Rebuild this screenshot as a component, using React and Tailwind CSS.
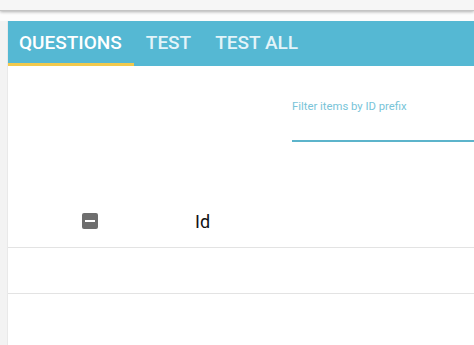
const tabs = ['QUESTIONS', 'TEST', 'TEST ALL']

const App = () => {
  return (
    <div className="w-[474px] h-[345px] overflow-hidden bg-white font-['Roboto',sans-serif]">
      {/* top app bar strip */}
      <div className="relative z-10 h-[11px] bg-[#f6f6f6] border-b border-[#c4c4c4] shadow-[0_1px_3px_rgba(0,0,0,0.3)]" />
      <div className="h-[10px] bg-[#fcfcfc]" />

      <div className="flex h-[324px]">
        <div className="w-2 bg-[#f3f3f3] border-r border-[#e9e9e9]" />

        <div className="flex-1 bg-white">
          {/* tabs */}
          <div className="h-[45px] bg-[#55b8d3] flex">
            {tabs.map((tab, i) => (
              <div
                key={tab}
                className={
                  i === 0
                    ? 'pl-[11px] pr-3 flex items-center border-b-[3px] border-[#f2c94c] pt-[3px] text-white text-[19px] font-medium'
                    : 'px-3 flex items-center text-[#e3f4f9] text-[19px] font-medium'
                }
              >
                {tab}
              </div>
            ))}
          </div>

          {/* filter */}
          <div className="h-[129px] pl-[284px] pt-[33px]">
            <div className="text-[11.3px] leading-[16px] text-[#78c4d8]">Filter items by ID prefix</div>
            <div className="mt-[25px] h-[2px] bg-[#5cb4cb]" />
          </div>

          {/* table header */}
          <div className="h-[53px] flex items-center pl-[74px] border-b border-[#e3e3e3]">
            <div className="w-4 h-4 rounded-[2px] bg-[#6e6e6e] flex items-center justify-center">
              <div className="w-[10px] h-[2px] bg-white" />
            </div>
            <div className="ml-[97px] text-[18px] font-normal text-[#111]">Id</div>
          </div>
          <div className="h-[46px] border-b border-[#e3e3e3]" />
        </div>
      </div>
    </div>
  )
}

export default App
